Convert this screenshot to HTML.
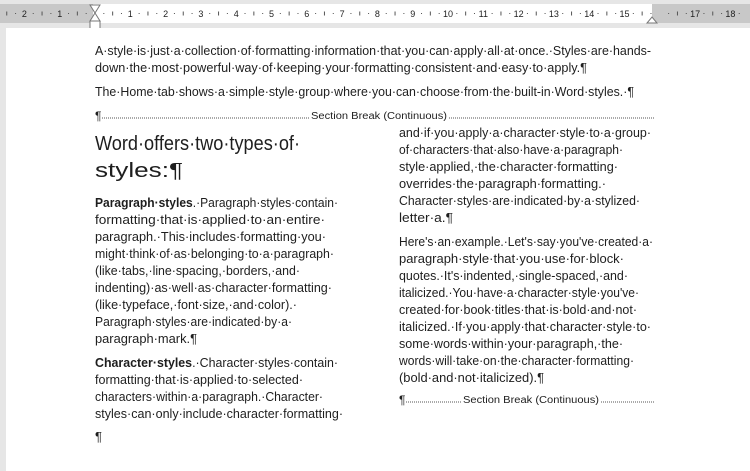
<!DOCTYPE html>
<html><head><meta charset="utf-8"><style>
html,body{margin:0;padding:0;width:750px;height:471px;overflow:hidden;background:#e6e6e6}
svg{display:block}
text{font-family:"Liberation Sans",sans-serif;fill:#1e1e1e}
</style></head><body>
<svg id="s" width="750" height="471" xmlns="http://www.w3.org/2000/svg">
<rect x="0" y="0" width="750" height="471" fill="#e6e6e6"/>
<rect x="0" y="4" width="750" height="19" fill="#c8c8c8"/>
<rect x="93" y="4" width="559" height="19" fill="#ffffff"/>
<g id="ruler" font-size="9"></g>
<path d="M90 5 L100 5 L95 13 L100 21 L90 21 L95 13 Z" fill="#fff" stroke="#777" stroke-width="1"/>
<rect x="90" y="21" width="10" height="8" fill="#fff" stroke="#777"/>
<path d="M647 23 L657 23 L652 17 Z" fill="#fff" stroke="#777"/>
<rect x="6" y="28" width="744" height="443" fill="#fff"/>
<g font-size="13" id="t">
<text x="95" y="55" textLength="556" lengthAdjust="spacingAndGlyphs">A·style·is·just·a·collection·of·formatting·information·that·you·can·apply·all·at·once.·Styles·are·hands-</text>
<text x="95" y="72" textLength="492" lengthAdjust="spacingAndGlyphs">down·the·most·powerful·way·of·keeping·your·formatting·consistent·and·easy·to·apply.¶</text>
<text x="95" y="96" textLength="539" lengthAdjust="spacingAndGlyphs">The·Home·tab·shows·a·simple·style·group·where·you·can·choose·from·the·built-in·Word·styles.·¶</text>
<text x="95" y="120" font-size="12">¶</text>
<line x1="102" y1="118" x2="309" y2="118" stroke="#555" stroke-dasharray="1,1"/>
<text x="311" y="119" font-size="10" textLength="136" lengthAdjust="spacingAndGlyphs">Section Break (Continuous)</text>
<line x1="449" y1="118" x2="655" y2="118" stroke="#555" stroke-dasharray="1,1"/>
<text x="95" y="150" font-size="20" fill="#333" textLength="205" lengthAdjust="spacingAndGlyphs">Word·offers·two·types·of·</text>
<text x="95" y="177" font-size="20" fill="#333" textLength="88" lengthAdjust="spacingAndGlyphs">styles:¶</text>
<text x="95" y="207" textLength="243" lengthAdjust="spacingAndGlyphs"><tspan font-weight="bold">Paragraph·styles</tspan>.·Paragraph·styles·contain·</text>
<text x="95" y="224" textLength="230" lengthAdjust="spacingAndGlyphs">formatting·that·is·applied·to·an·entire·</text>
<text x="95" y="241" textLength="231" lengthAdjust="spacingAndGlyphs">paragraph.·This·includes·formatting·you·</text>
<text x="95" y="258" textLength="239" lengthAdjust="spacingAndGlyphs">might·think·of·as·belonging·to·a·paragraph·</text>
<text x="95" y="275" textLength="205" lengthAdjust="spacingAndGlyphs">(like·tabs,·line·spacing,·borders,·and·</text>
<text x="95" y="292" textLength="237" lengthAdjust="spacingAndGlyphs">indenting)·as·well·as·character·formatting·</text>
<text x="95" y="309" textLength="202" lengthAdjust="spacingAndGlyphs">(like·typeface,·font·size,·and·color).·</text>
<text x="95" y="326" textLength="197" lengthAdjust="spacingAndGlyphs">Paragraph·styles·are·indicated·by·a·</text>
<text x="95" y="343" textLength="102" lengthAdjust="spacingAndGlyphs">paragraph·mark.¶</text>
<text x="95" y="367" textLength="243" lengthAdjust="spacingAndGlyphs"><tspan font-weight="bold">Character·styles</tspan>.·Character·styles·contain·</text>
<text x="95" y="384" textLength="208" lengthAdjust="spacingAndGlyphs">formatting·that·is·applied·to·selected·</text>
<text x="95" y="401" textLength="228" lengthAdjust="spacingAndGlyphs">characters·within·a·paragraph.·Character·</text>
<text x="95" y="418" textLength="248" lengthAdjust="spacingAndGlyphs">styles·can·only·include·character·formatting·</text>
<text x="95" y="441">¶</text>
<text x="399" y="137" textLength="252" lengthAdjust="spacingAndGlyphs">and·if·you·apply·a·character·style·to·a·group·</text>
<text x="399" y="154" textLength="224" lengthAdjust="spacingAndGlyphs">of·characters·that·also·have·a·paragraph·</text>
<text x="399" y="171" textLength="219" lengthAdjust="spacingAndGlyphs">style·applied,·the·character·formatting·</text>
<text x="399" y="188" textLength="207" lengthAdjust="spacingAndGlyphs">overrides·the·paragraph·formatting.·</text>
<text x="399" y="205" textLength="241" lengthAdjust="spacingAndGlyphs">Character·styles·are·indicated·by·a·stylized·</text>
<text x="399" y="222" textLength="54" lengthAdjust="spacingAndGlyphs">letter·a.¶</text>
<text x="399" y="246" textLength="254" lengthAdjust="spacingAndGlyphs">Here's·an·example.·Let's·say·you've·created·a·</text>
<text x="399" y="263" textLength="225" lengthAdjust="spacingAndGlyphs">paragraph·style·that·you·use·for·block·</text>
<text x="399" y="280" textLength="229" lengthAdjust="spacingAndGlyphs">quotes.·It's·indented,·single-spaced,·and·</text>
<text x="399" y="297" textLength="240" lengthAdjust="spacingAndGlyphs">italicized.·You·have·a·character·style·you've·</text>
<text x="399" y="314" textLength="238" lengthAdjust="spacingAndGlyphs">created·for·book·titles·that·is·bold·and·not·</text>
<text x="399" y="331" textLength="252" lengthAdjust="spacingAndGlyphs">italicized.·If·you·apply·that·character·style·to·</text>
<text x="399" y="348" textLength="224" lengthAdjust="spacingAndGlyphs">some·words·within·your·paragraph,·the·</text>
<text x="399" y="365" textLength="235" lengthAdjust="spacingAndGlyphs">words·will·take·on·the·character·formatting·</text>
<text x="399" y="382" textLength="145" lengthAdjust="spacingAndGlyphs">(bold·and·not·italicized).¶</text>
<text x="399" y="404" font-size="12">¶</text>
<line x1="406" y1="402" x2="461" y2="402" stroke="#555" stroke-dasharray="1,1"/>
<text x="463" y="403" font-size="10" textLength="136" lengthAdjust="spacingAndGlyphs">Section Break (Continuous)</text>
<line x1="601" y1="402" x2="655" y2="402" stroke="#555" stroke-dasharray="1,1"/>
</g>
</svg>
<script>
var g=document.getElementById('ruler'),u=35.3,o=95,h='';
for(var n=-3;n<=19;n++){
 var x=o+u*n;
 if(n!==0&&n!==16&&x>5&&x<745)h+='<text x="'+x+'" y="17" text-anchor="middle" font-size="9" fill="#444">'+Math.abs(n)+'</text>';
 [0.25,0.75].forEach(function(f){var xx=x+u*f;if(xx>2&&xx<748)h+='<rect x="'+(xx-0.5)+'" y="13" width="1" height="1" fill="#555"/>';});
 var xh=x+u*0.5;if(xh>2&&xh<748)h+='<rect x="'+(xh-0.5)+'" y="11.5" width="1" height="4" fill="#555"/>';
}
g.innerHTML=h;
</script>
</body></html>
